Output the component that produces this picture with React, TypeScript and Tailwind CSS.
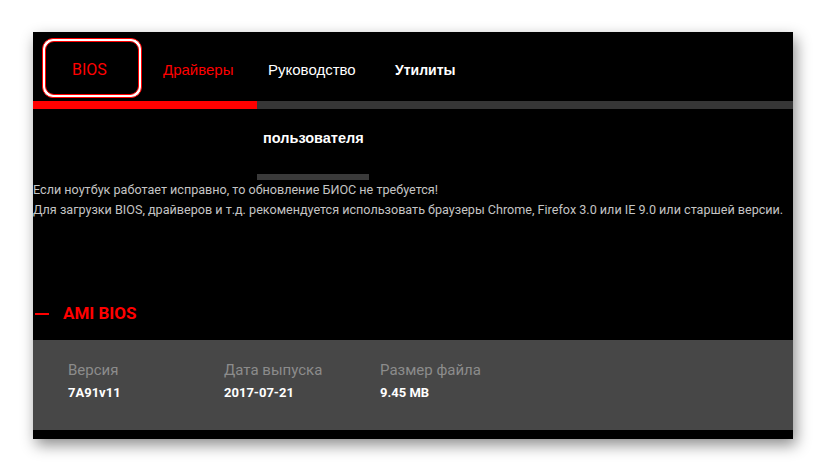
const tabs = [
  { label: "Драйверы", cls: "text-[#ff0000] w-[105px]" },
  { label: "Руководство", cls: "text-white w-[127px]" },
  { label: "Утилиты", cls: "text-white font-bold text-[14px]" },
];

const specs = [
  { label: "Версия", value: "7A91v11" },
  { label: "Дата выпуска", value: "2017-07-21" },
  { label: "Размер файла", value: "9.45 MB" },
];

export default function App() {
  return (
    <div className="w-[825px] h-[471px] bg-white pt-[32px] pl-[33px] overflow-hidden">
      <div className="relative w-[760px] h-[407px] bg-black shadow-[3px_6px_14px_rgba(0,0,0,0.45)] font-['Liberation_Sans',sans-serif]">
        {/* annotation frame round the BIOS tab */}
        <div className="absolute left-[9px] top-[6px] w-[100px] h-[60px] rounded-[11px] border border-[#ff0000] bg-white p-[2px]">
          <div className="w-full h-full rounded-[9px] border border-[#ff0000] bg-black" />
        </div>

        {/* tabs */}
        <div className="relative h-[69px] flex items-center pt-[7px] text-[15px]">
          <div className="w-[130px] pl-[39px] text-[16px] text-[#ff0000] font-['Roboto',sans-serif]">BIOS</div>
          {tabs.map((t) => (
            <div key={t.label} className={t.cls}>
              {t.label}
            </div>
          ))}
        </div>

        <div className="h-[8px] flex">
          <div className="w-[224px] bg-[#ff0000]" />
          <div className="flex-1 bg-[#363636]" />
        </div>

        <div className="pl-[230px] pt-[19px] text-[14.5px] font-bold text-white leading-[20px]">
          пользователя
        </div>
        <div className="ml-[224px] mt-[26px] w-[112px] h-[6px] bg-[#3a3a3a]" />

        <div className="font-['Roboto',sans-serif] text-[12.6px] leading-[20px] text-[#c4c4c4]">
          <div>Если ноутбук работает исправно, то обновление БИОС не требуется!</div>
          <div>
            Для загрузки BIOS, драйверов и т.д. рекомендуется использовать браузеры Chrome, Firefox 3.0 или IE 9.0 или старшей версии.
          </div>
        </div>

        <div className="mt-[84px] h-[20px] flex items-center gap-[14px] pl-[2px]">
          <div className="w-[14px] h-[2px] bg-[#ff0000]" />
          <div className="font-['Roboto',sans-serif] font-bold text-[17px] text-[#ff0000]">AMI BIOS</div>
        </div>

        <div className="mt-[16px] h-[90px] bg-[#474747] flex pl-[35px] pt-[19px] font-['Roboto',sans-serif]">
          {specs.map((s) => (
            <div key={s.label} className="w-[156px]">
              <div className="text-[15px] leading-[22px] text-[#8c8c8c]">{s.label}</div>
              <div className="mt-[1px] text-[13px] leading-[22px] font-bold text-white">{s.value}</div>
            </div>
          ))}
        </div>
      </div>
    </div>
  );
}
